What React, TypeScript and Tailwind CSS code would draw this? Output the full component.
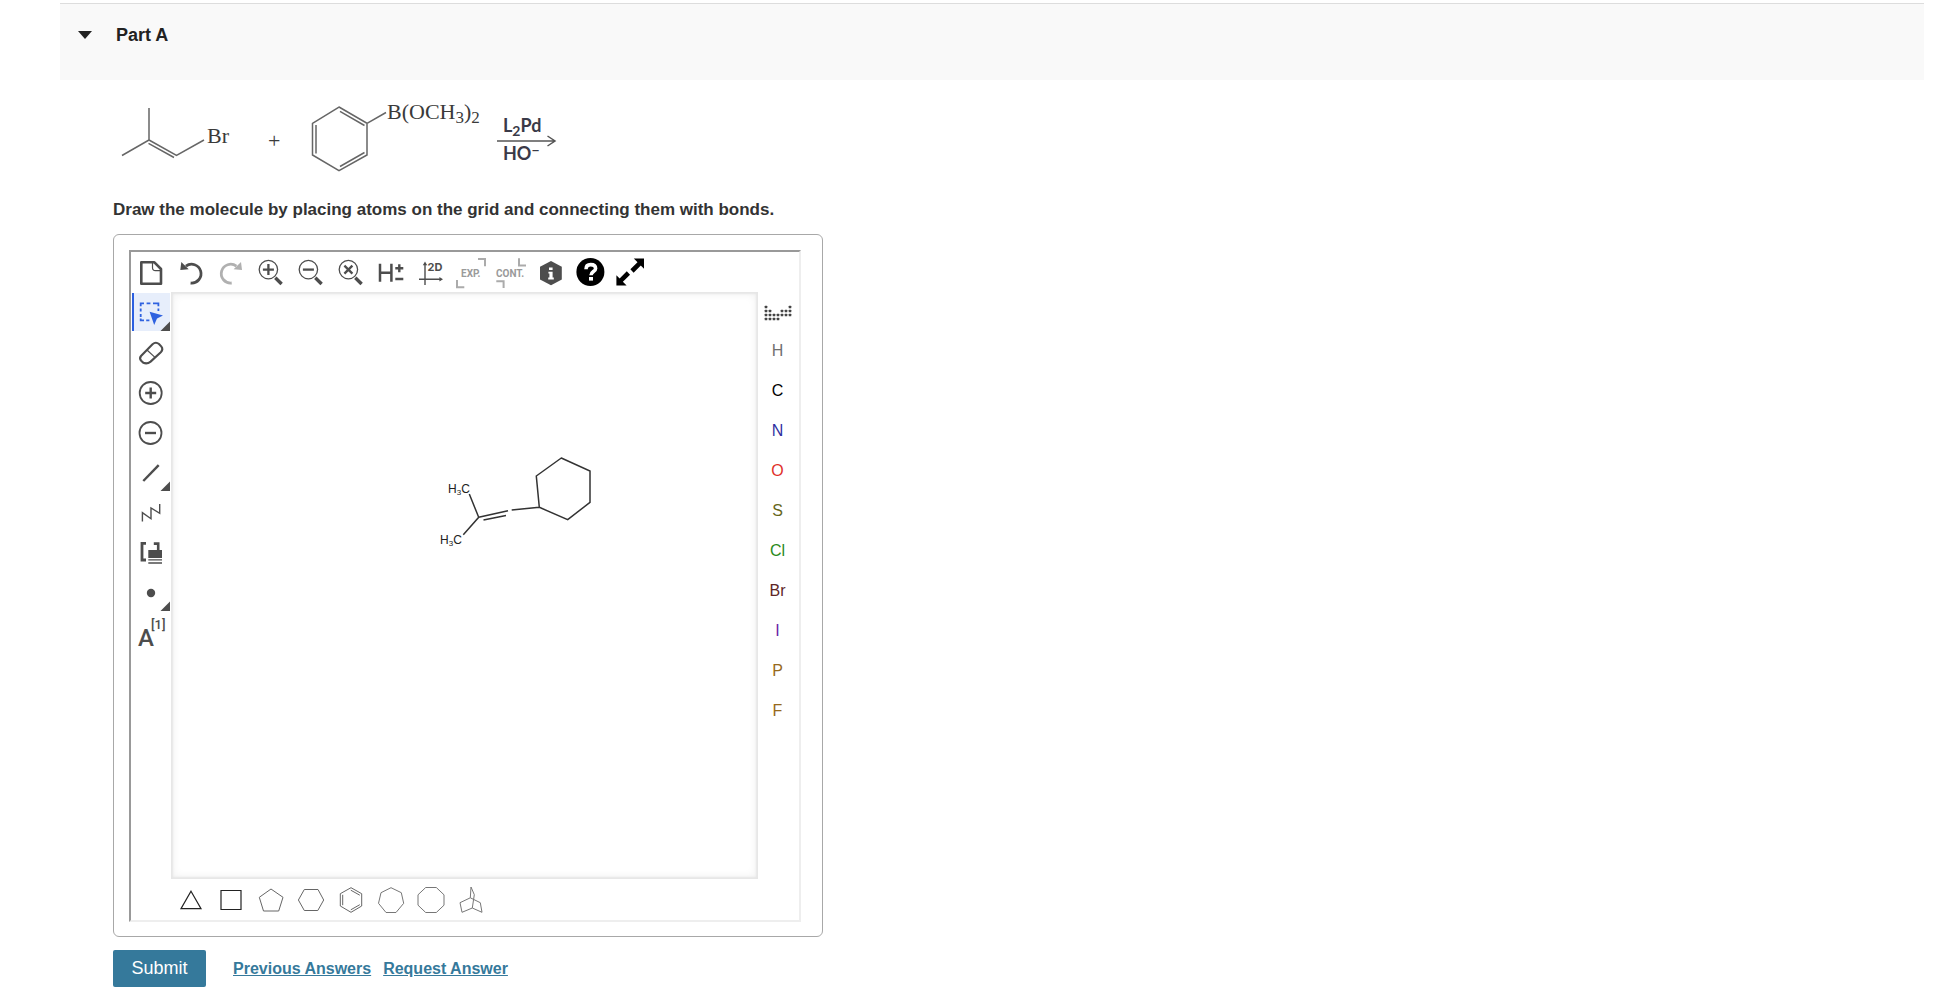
import React from "react";

type IconProps = { children: React.ReactNode; className?: string };

function Icon({ children, className = "" }: IconProps) {
  return (
    <svg viewBox="0 0 40 40" className={`size-10 shrink-0 ${className}`} fill="none" stroke="currentColor" aria-hidden="true">
      {children}
    </svg>
  );
}

const corner = <path d="M29.5 39H39V29.5Z" fill="#4d4d4d" stroke="none" />;

const lens = (
  <>
    <circle cx="17.4" cy="17.6" r="9.2" strokeWidth="1.3" />
    <path d="M24.3 25.7 30.6 32" strokeWidth="3.4" />
  </>
);

const undoArrow = (
  <>
    <path d="M15.6 14.2A9.4 9.4 0 1 1 20.3 31" strokeWidth="2.8" />
    <path d="M11 10 10 18 18.4 17.3Z" fill="currentColor" stroke="none" />
  </>
);

type Tool = { label: string; icon: React.ReactNode; tone?: string };

const topTools: Tool[] = [
  {
    label: "New document",
    icon: (
      <>
        <path d="M10.3 10.3H23.4L30 17V31.8H10.3Z" strokeWidth="2.6" strokeLinejoin="round" />
        <path d="M21.5 10.5V15.5Q21.5 18.7 24.5 18.7H29.8" strokeWidth="1.2" />
      </>
    ),
  },
  { label: "Undo", icon: <g transform="translate(-0.7 0)">{undoArrow}</g> },
  { label: "Redo", tone: "text-[#b0b0b0]", icon: <g transform="translate(41 0) scale(-1 1)">{undoArrow}</g> },
  { label: "Zoom in", icon: <>{lens}<path d="M11.9 17.6H22.9M17.4 12.1V23.1" strokeWidth="2.3" /></> },
  { label: "Zoom out", icon: <>{lens}<path d="M11.9 17.6H22.9" strokeWidth="2.3" /></> },
  { label: "Reset zoom", icon: <>{lens}<path d="M13.4 13.6 21.4 21.6M21.4 13.6 13.4 21.6" strokeWidth="2.3" /></> },
  {
    label: "Toggle hydrogens",
    icon: (
      <>
        <path d="M9 11.7V29.8M20.4 11.7V29.8M9 20.7H20.4" strokeWidth="2.5" />
        <path d="M24.3 16.2H32.3M28.3 12.2V20.2M24.3 27H32.3" strokeWidth="2.4" />
      </>
    ),
  },
  {
    label: "Clean 2D structure",
    icon: (
      <>
        <path d="M14 12V33M8 27.2H30" strokeWidth="1.4" />
        <path d="M14 9.5 11.8 13.2H16.2ZM32 27.2 28.4 25V29.4Z" fill="currentColor" stroke="none" />
        <text x="16.5" y="19" fontSize="11" fontWeight="700" fontFamily="Inter, sans-serif" fill="currentColor" stroke="none">2D</text>
      </>
    ),
  },
  {
    label: "Expand abbreviations",
    tone: "text-[#9a9a9a]",
    icon: (
      <>
        <path d="M27 7H34V14.3M6 28V35.3H13.3" stroke="#ababab" strokeWidth="2" />
        <text x="10" y="25" fontSize="10" fontWeight="700" fontFamily="Roboto, sans-serif" fill="currentColor" stroke="none">EXP.</text>
      </>
    ),
  },
  {
    label: "Contract abbreviations",
    tone: "text-[#9a9a9a]",
    icon: (
      <>
        <path d="M28 6.3V13.6H35M5.3 29.2H12.6V36" stroke="#ababab" strokeWidth="2" />
        <text x="5" y="25" fontSize="10" fontWeight="700" fontFamily="Roboto, sans-serif" fill="currentColor" stroke="none">CONT.</text>
      </>
    ),
  },
  {
    label: "Information",
    icon: (
      <>
        <path d="M20 9 30.8 14.7V27.5L20 33.2 9 27.5V14.7Z" fill="currentColor" stroke="none" />
        <path d="M18 15.4H21.6V18H18ZM17.4 19.8H21.6V25.5H22.8V27.4H17.2V25.5H18.4V21.6H17.4Z" fill="#fff" stroke="none" />
      </>
    ),
  },
  {
    label: "Help",
    tone: "text-black",
    icon: (
      <>
        <circle cx="19.4" cy="20" r="14" fill="currentColor" stroke="none" />
        <path d="M15 17.2C15 13.6 17.2 12.6 19.7 12.6C22.6 12.6 24.6 14 24.6 16.5C24.6 19.6 20 19.6 20 23.2" stroke="#fff" strokeWidth="3.6" />
        <path d="M18 25H22V28.6H18Z" fill="#fff" stroke="none" />
      </>
    ),
  },
  {
    label: "Full screen",
    tone: "text-black",
    icon: (
      <>
        <path d="M21 19 29.4 10.6M17.4 21 9 29.4" strokeWidth="4.6" />
        <path d="M33 6.6V16.8L22.8 6.6ZM5.4 33.4V23.2L15.6 33.4Z" fill="currentColor" stroke="none" />
      </>
    ),
  },
];

const sideTools: Tool[] = [
  {
    label: "Selection tool",
    icon: (
      <>
        <g stroke="#2f62e0" strokeWidth="1.8">
          <path d="M9.7 14.2V11.3H13M15.6 11.3H19.4M22 11.3H25.2M24.4 11.3H27.4V14.2M27.4 16.4V19M9.7 16.4V19.6M9.7 22V25M9.7 26.4V28.4H13M15.2 28.4H18.4" />
        </g>
        <path d="M18.6 19.8 32 23.6 26 26.6 23.2 33Z" fill="#2f62e0" stroke="none" />
        {corner}
      </>
    ),
  },
  {
    label: "Eraser",
    icon: (
      <>
        <path d="M10 24 21.5 12.2Q24.8 9.4 28 12L30.2 14.4Q32.6 17.4 29.8 20.2L19.6 29.6Q16.2 32.4 12.4 30.8L10.2 28.8Q8 26.4 10 24Z" strokeWidth="2.1" />
        <path d="M16 18 24 25.4" strokeWidth="1.2" />
      </>
    ),
  },
  { label: "Increase charge", icon: <><circle cx="19.7" cy="21" r="11" strokeWidth="1.8" /><path d="M14.2 21H25.2M19.7 15.5V26.5" strokeWidth="2.4" /></> },
  { label: "Decrease charge", icon: <><circle cx="19.5" cy="21" r="11" strokeWidth="1.8" /><path d="M14 21H25" strokeWidth="2.4" /></> },
  { label: "Single bond", icon: <><path d="M12.3 29 27.7 13.2" strokeWidth="2.4" />{corner}</> },
  { label: "Chain", icon: <path d="M11.4 29.5V20.7L20 26.7V16L28.7 21.3V12" strokeWidth="1.4" /> },
  {
    label: "Repeating unit",
    icon: (
      <>
        <path d="M15 11.3H11V28H15" strokeWidth="2.8" />
        <path d="M22.8 11.6H27.2V19" strokeWidth="2.6" />
        <path d="M17.3 18H31V26H17.3ZM17.3 27.2H31V28.6H17.3ZM17.3 30.2H31V31.8H17.3Z" fill="currentColor" stroke="none" />
      </>
    ),
  },
  { label: "Radical", icon: <><circle cx="20" cy="21" r="4.2" fill="currentColor" stroke="none" />{corner}</> },
  {
    label: "Atom map",
    icon: (
      <g fill="currentColor" stroke="none" fontFamily="Roboto, sans-serif" fontWeight="500">
        <text x="7" y="34" fontSize="24">A</text>
        <text x="20" y="16.5" fontSize="13">[1]</text>
      </g>
    ),
  },
];

const elements = [
  { symbol: "H", color: "text-[#707070]" },
  { symbol: "C", color: "text-black" },
  { symbol: "N", color: "text-[#2f2fa0]" },
  { symbol: "O", color: "text-[#e0302a]" },
  { symbol: "S", color: "text-[#66661a]" },
  { symbol: "Cl", color: "text-[#2a8a1c]" },
  { symbol: "Br", color: "text-[#5e2626]" },
  { symbol: "I", color: "text-[#6a26a6]" },
  { symbol: "P", color: "text-[#96691c]" },
  { symbol: "F", color: "text-[#96691c]" },
];

const rings: Tool[] = [
  { label: "Cyclopropane", tone: "text-[#222222]", icon: <path d="M20 11.3 30 28.6H10Z" strokeWidth="1.2" /> },
  { label: "Cyclobutane", tone: "text-[#222222]", icon: <path d="M10 10.5H30V29.5H10Z" strokeWidth="1.2" /> },
  { label: "Cyclopentane", tone: "text-[#666666]", icon: <path d="M20 9 32 17.3 27.7 31H12.5L8.3 17.3Z" /> },
  { label: "Cyclohexane", tone: "text-[#666666]", icon: <path d="M13.3 9.5H27L32.7 20 26.8 30.5H13.3L7.4 20Z" /> },
  {
    label: "Benzene",
    tone: "text-[#666666]",
    icon: <path d="M20 7.7 30.7 13.7V26L20 32.3 9.3 26V13.7ZM11.7 14.8V25.2M19.8 10.2 28.8 15.2M19.8 29.8 28.8 24.7" />,
  },
  { label: "Cycloheptane", tone: "text-[#777777]", icon: <path d="M20 7.7 30.3 12.7 32.7 23.3 25 32.5H15L7.5 23.3 10 12.7Z" /> },
  { label: "Cyclooctane", tone: "text-[#777777]", icon: <path d="M14.7 7.5H25.3L33 14.8V25.2L25.3 32.5H14.7L7 25.2V14.8Z" /> },
  {
    label: "Bicyclic ring",
    tone: "text-[#777777]",
    icon: <path d="M20 7 19.3 17.8 9 22.7 11 32.3 21.3 28 31 32.3 29.3 22.7 19.3 17.8M20 7 23.3 14.7 21.3 28" />,
  },
];

const tableDots: [number, number[]][] = [
  [0, [0, 6]],
  [1, [0, 1, 4, 5, 6]],
  [2, [0, 1, 2, 3, 4, 5, 6]],
  [3, [0, 1, 2, 3]],
];

function ToolButton({ tool, selected = false }: { tool: Tool; selected?: boolean }) {
  return (
    <button
      type="button"
      aria-label={tool.label}
      aria-pressed={selected}
      className={`m-px flex size-[38px] shrink-0 cursor-pointer items-center justify-center ${tool.tone ?? "text-[#4d4d4d]"} ${
        selected ? "bg-[#e7eefb] shadow-[inset_2px_0_0_#2b5fe0]" : ""
      }`}
    >
      <Icon>{tool.icon}</Icon>
    </button>
  );
}

function Reaction() {
  return (
    <svg
      viewBox="113 96 460 88"
      className="h-[88px] w-[460px] max-w-full"
      fill="none"
      stroke="#666666"
      strokeWidth="1.5"
      role="img"
      aria-label="Allylic bromide plus phenylboronic ester, palladium catalyst and hydroxide"
    >
      <path d="M149 108V140L122 155.5M149 140 176.5 155.5 204 140M148.5 143.3 174 157.5" />
      <path d="M339 107 367 123.3V155L339 170.7 312.5 155V123.3ZM316 125V153.5M340 111.3 364.5 125.5M340 166.5 364.5 152.5M367 123.3 386 112.5" />
      <path d="M497 141H554M547.5 136 555 141 547.5 146" stroke="#555555" />
      <g fill="#3a3a3a" stroke="none" fontFamily="'Liberation Serif', serif" fontSize="22">
        <text x="207" y="143">Br</text>
        <text x="268" y="148">+</text>
        <text x="387" y="119">
          B(OCH
          <tspan fontSize="17" dy="4">3</tspan>
          <tspan dy="-4">)</tspan>
          <tspan fontSize="17" dy="4">2</tspan>
        </text>
      </g>
      <g fill="#3a3a48" stroke="none" fontFamily="Lato, sans-serif" fontSize="18" fontWeight="700">
        <text x="503" y="132">
          L<tspan fontSize="14" dy="4">2</tspan>
          <tspan dy="-4">Pd</tspan>
        </text>
        <text x="503" y="160">
          HO<tspan fontSize="14" dy="-5">−</tspan>
        </text>
      </g>
    </svg>
  );
}

function Molecule() {
  return (
    <svg viewBox="171 292 587 587" className="block w-full" fill="none" stroke="#333333" strokeWidth="1.5" role="img" aria-label="Drawn molecule">
      <path d="M561.3 458 590 471V502.3L567.7 519.7 539.3 507.3 536.3 476ZM539.3 507.3 511.7 510M508 510.8 478.7 517.3M506 515.5 483.5 520M469.3 494 478.7 517.3 463.3 534.7" />
      <g fill="#222222" stroke="none" fontFamily="'Liberation Sans', sans-serif" fontSize="12">
        <text x="448" y="493">H<tspan fontSize="8" dy="2">3</tspan><tspan dy="-2">C</tspan></text>
        <text x="440" y="544">H<tspan fontSize="8" dy="2">3</tspan><tspan dy="-2">C</tspan></text>
      </g>
    </svg>
  );
}

function Editor() {
  return (
    <section
      aria-label="Molecule editor"
      className="w-full max-w-[710px] rounded-md border border-[#a8a8a8] pt-[15px] pr-[21px] pb-3.5 pl-[15px]"
    >
      <div className="border-2 border-t-[#999999] border-r-[#eeeeee] border-b-[#eeeeee] border-l-[#999999]">
        <div className="flex h-10 flex-wrap overflow-hidden">
          {topTools.map((tool) => (
            <ToolButton key={tool.label} tool={tool} />
          ))}
        </div>
        <div className="grid grid-cols-[40px_1fr_41px]">
          <div className="flex flex-col">
            {sideTools.map((tool, i) => (
              <ToolButton key={tool.label} tool={tool} selected={i === 0} />
            ))}
          </div>
          <div className="shadow-[inset_0_0_2px_2px_#e6e6e6,inset_0_0_8px_2px_#f0f0f0]">
            <Molecule />
          </div>
          <div className="flex flex-col pt-px pr-0.5">
            <button type="button" aria-label="Periodic table" className="flex h-[38px] cursor-pointer items-center justify-center pt-0.5">
              <svg viewBox="0 0 28 16" className="h-4 w-7" fill="#444444" aria-hidden="true">
                {tableDots.map(([row, cols]) =>
                  cols.map((col) => <rect key={`${row}-${col}`} x={col * 4 + 0.7} y={row * 4 + 0.7} width="2.6" height="2.6" rx="0.6" />)
                )}
              </svg>
            </button>
            {elements.map((el) => (
              <button key={el.symbol} type="button" className={`h-10 cursor-pointer text-base ${el.color}`}>
                {el.symbol}
              </button>
            ))}
          </div>
        </div>
        <div className="flex h-[41px] flex-wrap overflow-hidden pt-px pl-10">
          {rings.map((tool) => (
            <ToolButton key={tool.label} tool={tool} />
          ))}
        </div>
      </div>
    </section>
  );
}

export default function App() {
  return (
    <main className="bg-white pt-[3px] pr-[15px] pl-[60px] font-['Liberation_Sans',Arial,sans-serif] text-[#333333]">
      <header className="border-t border-[#dddddd] bg-[#f9f9f9] pt-[19px] pb-[33px] pl-[18px]">
        <h2>
          <button type="button" aria-expanded="true" className="flex cursor-pointer items-center gap-6 text-lg leading-6 font-bold text-[#222222]">
            <svg viewBox="0 0 14 8" className="h-2 w-3.5" fill="currentColor" aria-hidden="true">
              <path d="M0 0H14L7 8Z" />
            </svg>
            Part A
          </button>
        </h2>
      </header>
      <div className="pt-4 pb-[7px] pl-[53px]">
        <Reaction />
        <p className="mt-3.5 text-[17px] leading-6 font-bold">
          Draw the molecule by placing atoms on the grid and connecting them with bonds.
        </p>
        <div className="mt-3">
          <Editor />
        </div>
        <div className="mt-[13px] flex items-center">
          <button type="button" className="h-[37px] w-[93px] cursor-pointer rounded-xs bg-[#35799b] pb-0.5 text-lg text-white">
            Submit
          </button>
          <a href="#previous-answers" className="ml-[27px] text-base leading-6 font-bold text-[#35799b] underline">
            Previous Answers
          </a>
          <a href="#request-answer" className="ml-3 text-base leading-6 font-bold text-[#35799b] underline">
            Request Answer
          </a>
        </div>
      </div>
    </main>
  );
}
